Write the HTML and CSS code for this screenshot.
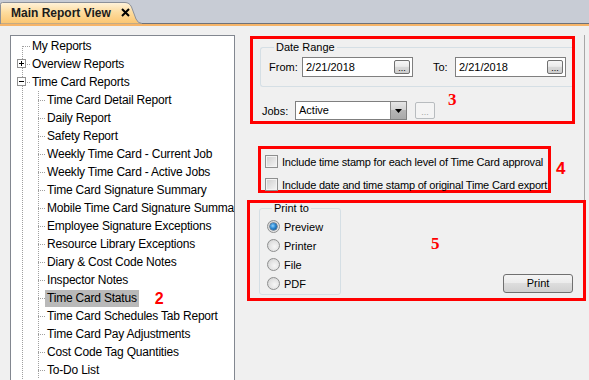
FILE: index.html
```html
<!DOCTYPE html>
<html>
<head>
<meta charset="utf-8">
<link rel="stylesheet" href="styles.css">
</head>
<body>
<div class="tabbar">
  <div class="tab">
    <svg class="tab-shape" width="142" height="22" viewBox="0 0 142 22">
      <defs>
        <linearGradient id="tg" x1="0" y1="0" x2="0" y2="1">
          <stop offset="0" stop-color="#fff3dc"/>
          <stop offset="0.45" stop-color="#fddc9f"/>
          <stop offset="1" stop-color="#fbc46e"/>
        </linearGradient>
      </defs>
      <path d="M0.5 22 V2.5 Q0.5 0.5 2.5 0.5 H125 Q129.5 0.5 131.5 5 L136 17 Q138 21.5 142 21.5 V22 Z" fill="url(#tg)" stroke="#8c9098" stroke-width="1"/>
    </svg>
    <span class="tab-title">Main Report View</span>
    <svg class="tab-close" width="9" height="9" viewBox="0 0 9 9">
      <path d="M1 1 L8 8 M8 1 L1 8" stroke="#000" stroke-width="2" fill="none"/>
    </svg>
  </div>
</div>
<div class="tabline"></div>
<div class="main">
  <div class="tree">
    <div class="nodes">
      <div class="node"><span class="hl"></span><span class="lbl">My Reports</span></div>
      <div class="node"><span class="hl"></span><span class="tog plus"></span><span class="lbl">Overview Reports</span></div>
      <div class="node"><span class="hl"></span><span class="tog minus"></span><span class="lbl">Time Card Reports</span></div>
      <div class="kids">
        <div class="node kid"><span class="hl"></span><span class="lbl">Time Card Detail Report</span></div>
        <div class="node kid"><span class="hl"></span><span class="lbl">Daily Report</span></div>
        <div class="node kid"><span class="hl"></span><span class="lbl">Safety Report</span></div>
        <div class="node kid"><span class="hl"></span><span class="lbl">Weekly Time Card - Current Job</span></div>
        <div class="node kid"><span class="hl"></span><span class="lbl">Weekly Time Card - Active Jobs</span></div>
        <div class="node kid"><span class="hl"></span><span class="lbl">Time Card Signature Summary</span></div>
        <div class="node kid"><span class="hl"></span><span class="lbl">Mobile Time Card Signature Summary</span></div>
        <div class="node kid"><span class="hl"></span><span class="lbl">Employee Signature Exceptions</span></div>
        <div class="node kid"><span class="hl"></span><span class="lbl">Resource Library Exceptions</span></div>
        <div class="node kid"><span class="hl"></span><span class="lbl">Diary &amp; Cost Code Notes</span></div>
        <div class="node kid"><span class="hl"></span><span class="lbl">Inspector Notes</span></div>
        <div class="node kid"><span class="hl"></span><span class="lbl sel">Time Card Status</span><span class="num num-tree">2</span></div>
        <div class="node kid"><span class="hl"></span><span class="lbl">Time Card Schedules Tab Report</span></div>
        <div class="node kid"><span class="hl"></span><span class="lbl">Time Card Pay Adjustments</span></div>
        <div class="node kid"><span class="hl"></span><span class="lbl">Cost Code Tag Quantities</span></div>
        <div class="node kid"><span class="hl"></span><span class="lbl">To-Do List</span></div>
      </div>
    </div>
  </div>
  <div class="right">
    <div class="upper">
      <div class="mark box3">
        <fieldset class="group date-group">
          <legend>Date Range</legend>
          <div class="date-row">
            <span class="lab lab-from">From:</span>
            <div class="field date"><span>2/21/2018</span><span class="btn-dots">...</span></div>
            <span class="lab lab-to">To:</span>
            <div class="field date"><span>2/21/2018</span><span class="btn-dots">...</span></div>
          </div>
        </fieldset>
        <div class="jobs-row">
          <span class="lab lab-jobs">Jobs:</span>
          <div class="field select"><span>Active</span><span class="drop"><svg width="7" height="4" viewBox="0 0 7 4"><path d="M0 0 H7 L3.5 4 Z" fill="#000"/></svg></span></div>
          <span class="btn-dis">...</span>
        </div>
        <span class="num num3">3</span>
      </div>
      <div class="mark box4">
        <div class="chk-row"><span class="chk"></span><span class="chk-text">Include time stamp for each level of Time Card approval</span></div>
        <div class="chk-row"><span class="chk"></span><span class="chk-text">Include date and time stamp of original Time Card export</span></div>
        <span class="num num4">4</span>
      </div>
    </div>
    <div class="mark box5">
      <fieldset class="group print-group">
        <legend>Print to</legend>
        <div class="radio-row"><span class="radio on"></span><span>Preview</span></div>
        <div class="radio-row"><span class="radio"></span><span>Printer</span></div>
        <div class="radio-row"><span class="radio"></span><span>File</span></div>
        <div class="radio-row"><span class="radio"></span><span>PDF</span></div>
      </fieldset>
      <span class="btn-print">Print</span>
      <span class="num num5">5</span>
    </div>
  </div>
</div>
</body>
</html>
```

FILE: styles.css
```css
* { box-sizing: border-box; }
html, body { margin: 0; padding: 0; }
body {
  width: 589px;
  height: 380px;
  overflow: hidden;
  background: #f0f0f0;
  font-family: "Liberation Sans", Arial, sans-serif;
  font-size: 11px;
  color: #000;
}

/* tab strip */
.tabbar {
  height: 23px;
  background: #c8ccd5;
  display: flex;
  align-items: flex-end;
}
.tab {
  position: relative;
  z-index: 1;
  width: 142px;
  height: 22px;
  margin-bottom: -1px;
  display: flex;
  align-items: center;
  padding-left: 11px;
  padding-bottom: 1px;
}
.tab-shape { position: absolute; left: 0; top: 0; }
.tab-title {
  position: relative;
  font-weight: bold;
  font-size: 12px;
  color: #1b1b1b;
}
.tab-close { position: relative; margin-left: 10px; }
.tabline {
  height: 3px;
  background: linear-gradient(#6d7179 0 1px, #f6b468 1px 3px);
}

/* layout */
.main {
  display: flex;
  margin-top: 9px;
}

/* tree */
.tree {
  flex: none;
  width: 225px;
  height: 360px;
  margin-left: 10px;
  background: #fff;
  border: 1px solid #828790;
  padding-top: 1px;
  font-size: 12px;
  letter-spacing: -0.2px;
  overflow: hidden;
}
.nodes {
  background-image: repeating-linear-gradient(to bottom, #a0a0a0 0 1px, transparent 1px 2px);
  background-size: 1px 100%;
  background-position: 11px 9px;
  background-repeat: no-repeat;
}
.node {
  position: relative;
  height: 18px;
  display: flex;
  align-items: center;
}
.hl {
  flex: none;
  width: 8px;
  margin-left: 11px;
  height: 0;
  border-top: 1px dotted #a0a0a0;
}
.kids {
  background-image: repeating-linear-gradient(to bottom, #a0a0a0 0 1px, transparent 1px 2px);
  background-size: 1px 100%;
  background-position: 27px 0;
  background-repeat: no-repeat;
}
.kid .hl { margin-left: 27px; width: 7px; }
.lbl {
  flex: none;
  padding: 0 2px;
  height: 17px;
  line-height: 17px;
  white-space: nowrap;
}
.lbl.sel { background: #b9b9b9; }
.tog {
  position: absolute;
  left: 6px;
  top: 4px;
  width: 9px;
  height: 9px;
  border: 1px solid #919191;
  background: #fff;
}
.tog::before {
  content: "";
  position: absolute;
  left: 1px; top: 3px;
  width: 5px; height: 1px;
  background: #000;
}
.tog.plus::after {
  content: "";
  position: absolute;
  left: 3px; top: 1px;
  width: 1px; height: 5px;
  background: #000;
}

/* annotation numbers */
.num {
  color: #ff0000;
  font-weight: bold;
  letter-spacing: 0;
}
.num-tree {
  flex: none;
  font-family: "Liberation Sans", Arial, sans-serif;
  font-size: 16px;
  margin-left: 16px;
  line-height: 17px;
}
.num3, .num4, .num5 { position: absolute; line-height: 17px; }
.num3 {
  font-family: "Liberation Serif", "Times New Roman", serif;
  font-size: 17px;
  left: 195px;
  top: 52px;
}
.num4 {
  font-family: "Liberation Sans", Arial, sans-serif;
  font-size: 17px;
  left: 295px;
  top: 11px;
}
.num5 {
  font-family: "Liberation Serif", "Times New Roman", serif;
  font-size: 17px;
  left: 181px;
  top: 32px;
}

/* right side */
.right {
  flex: none;
  margin-left: 12px;
  width: 339px;
}
.upper {
  width: 338px;
  padding-top: 1px;
  padding-bottom: 7px;
  border-right: 1px solid #a7a7a7;
}
.mark {
  position: relative;
  border: 3px solid #ff0000;
}
.box3 {
  margin-left: 3px;
  width: 325px;
  height: 88px;
  padding: 2px 0 0 7px;
}
.group {
  margin: 0;
  min-width: 0;
  border: 1px solid #d5dfe5;
  border-radius: 3px;
}
.group legend {
  padding: 0 2px;
  margin-left: 5px;
  line-height: 12px;
  font-size: 11px;
}
.date-group {
  border-right: none;
  border-radius: 3px 0 0 3px;
  padding: 4px 0 9px 8px;
}
.date-row { display: flex; align-items: center; }
.lab { flex: none; }
.lab-from { width: 33px; }
.lab-to { width: 22px; margin-left: 20px; }
.field {
  flex: none;
  background: #fff;
  border: 1px solid #7f7f7f;
  display: flex;
  align-items: center;
  justify-content: space-between;
}
.date {
  width: 111px;
  height: 20px;
  padding: 0 2px 0 3px;
}
.btn-dots {
  width: 16px;
  height: 14px;
  border: 1px solid #707070;
  border-radius: 2px;
  background: linear-gradient(#f6f6f6 0, #ebebeb 45%, #d9d9d9 50%, #cdcdcd 100%);
  font-size: 9px;
  line-height: 15px;
  text-align: center;
  letter-spacing: 0;
}
.jobs-row {
  display: flex;
  align-items: center;
  margin-top: 14px;
  margin-left: 2px;
}
.lab-jobs { width: 33px; }
.select {
  width: 112px;
  height: 19px;
  padding-left: 3px;
  align-items: stretch;
}
.select span:first-child { line-height: 17px; }
.drop {
  width: 16px;
  border-left: 1px solid #8a8a8a;
  background: linear-gradient(#e6e6e6, #d0d0d0 50%, #b5b5b5 50%, #a9a9a9);
  display: flex;
  align-items: center;
  justify-content: center;
}
.btn-dis {
  margin-left: 8px;
  width: 20px;
  height: 17px;
  border: 1px solid #b8bcbf;
  border-radius: 2px;
  background: #f4f4f4;
  color: #a3a3a3;
  font-size: 9px;
  line-height: 19px;
  text-align: center;
}

.box4 {
  margin-top: 22px;
  margin-left: 11px;
  width: 293px;
  height: 47px;
  padding: 6px 0 0 4px;
}
.chk-row {
  display: flex;
  align-items: center;
  height: 13px;
}
.chk-row + .chk-row { margin-top: 10px; }
.chk {
  flex: none;
  width: 13px;
  height: 13px;
  border: 1px solid #8e8f8f;
  background: linear-gradient(135deg, #cdcdcd, #f6f6f6);
  box-shadow: inset 0 0 0 1px #f3f3f3;
}
.chk-text {
  margin-left: 4px;
  letter-spacing: -0.2px;
  white-space: nowrap;
}

.box5 {
  width: 339px;
  height: 101px;
  display: flex;
  justify-content: space-between;
  padding-left: 9px;
}
.print-group {
  width: 82px;
  height: 93px;
  margin-top: -1px;
  padding: 3px 0 1px 7px;
  align-self: flex-start;
}
.radio-row {
  display: flex;
  align-items: center;
  height: 19px;
}
.radio {
  flex: none;
  width: 13px;
  height: 13px;
  margin-right: 4px;
  border-radius: 50%;
  border: 1px solid #8e8f8f;
  background: radial-gradient(circle at 60% 60%, #f6f6f6 0, #e2e2e2 55%, #c9c9c9 100%);
  display: flex;
  align-items: center;
  justify-content: center;
}
.radio.on::after {
  content: "";
  width: 7px;
  height: 7px;
  border-radius: 50%;
  background: radial-gradient(circle at 40% 40%, #8fd3ff 0, #2a86d0 45%, #0e3f70 100%);
  box-shadow: 0 0 0 0.5px #1c3c5c;
}
.btn-print {
  align-self: flex-end;
  margin: 0 10px 5px 0;
  width: 70px;
  height: 19px;
  border: 1px solid #707070;
  border-radius: 3px;
  background: linear-gradient(#f4f4f4 0, #ececec 45%, #dddddd 50%, #d0d0d0 100%);
  text-align: center;
  line-height: 17px;
}
```
